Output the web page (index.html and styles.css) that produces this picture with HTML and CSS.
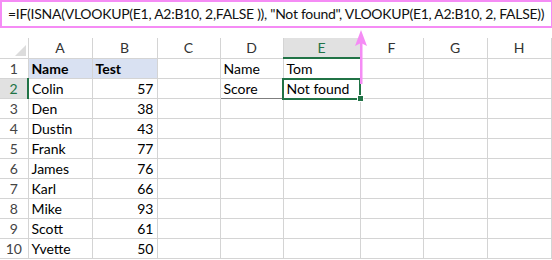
FILE: index.html
```html
<!DOCTYPE html>
<html lang="en">
<head>
    <meta charset="UTF-8">
    <title>VLOOKUP with ISNA</title>
    <link rel="stylesheet" href="styles.css">
</head>
<body>
    <div class="formula-bar">=IF(ISNA(VLOOKUP(E1, A2:B10, 2,FALSE )), "Not found", VLOOKUP(E1, A2:B10, 2, FALSE))</div>

    <div class="sheet">
        <table class="grid">
            <colgroup>
                <col class="c-hdr">
                <col class="c-a">
                <col class="c-b">
                <col class="c-c">
                <col class="c-d">
                <col class="c-e">
                <col class="c-f">
                <col class="c-g">
                <col class="c-h">
            </colgroup>
            <tr class="col-heads">
                <th class="corner"><span class="tri"></span></th>
                <th>A</th><th>B</th><th>C</th><th>D</th>
                <th class="sel">E</th>
                <th>F</th><th>G</th><th>H</th>
            </tr>
            <tr>
                <th class="row-num">1</th>
                <td class="title">Name</td><td class="title">Test</td><td></td>
                <td class="box box-top">Name</td><td class="box box-top box-right">Tom</td>
                <td></td><td></td><td></td>
            </tr>
            <tr>
                <th class="row-num sel">2</th>
                <td>Colin</td><td class="num">57</td><td></td>
                <td class="box box-bottom">Score</td><td class="box box-bottom box-right active">Not found</td>
                <td></td><td></td><td></td>
            </tr>
            <tr><th class="row-num">3</th><td>Den</td><td class="num">38</td><td></td><td></td><td></td><td></td><td></td><td></td></tr>
            <tr><th class="row-num">4</th><td>Dustin</td><td class="num">43</td><td></td><td></td><td></td><td></td><td></td><td></td></tr>
            <tr><th class="row-num">5</th><td>Frank</td><td class="num">77</td><td></td><td></td><td></td><td></td><td></td><td></td></tr>
            <tr><th class="row-num">6</th><td>James</td><td class="num">76</td><td></td><td></td><td></td><td></td><td></td><td></td></tr>
            <tr><th class="row-num">7</th><td>Karl</td><td class="num">66</td><td></td><td></td><td></td><td></td><td></td><td></td></tr>
            <tr><th class="row-num">8</th><td>Mike</td><td class="num">93</td><td></td><td></td><td></td><td></td><td></td><td></td></tr>
            <tr><th class="row-num">9</th><td>Scott</td><td class="num">61</td><td></td><td></td><td></td><td></td><td></td><td></td></tr>
            <tr><th class="row-num">10</th><td>Yvette</td><td class="num">50</td><td></td><td></td><td></td><td></td><td></td><td></td></tr>
        </table>

        <!-- pink arrow from E2 up to the formula -->
        <svg class="arrow" width="16" height="54" viewBox="0 0 16 54">
            <path d="M8 0 L14 16 L8 13 L2 16 Z" fill="#f58cf5"/>
            <rect x="7" y="12" width="2.5" height="42" fill="#f58cf5"/>
        </svg>
    </div>
</body>
</html>
```

FILE: styles.css
```css
/* General */
body {
    margin: 0;
    background: #fff;
    font-family: Lato, "Open Sans", sans-serif;
    color: #000;
}
/* Formula bar */
.formula-bar {
    height: 24px;
    width: 543px;
    border: 2px solid #f58cf5;
    padding-left: 6px;
    font-size: 14px;
    letter-spacing: -0.28px;
    line-height: 24px;
    white-space: nowrap;
    color: #111;
}
/* Sheet grid */
.sheet {
    position: relative;
    margin-top: 10px;
}
.grid {
    border-collapse: collapse;
    table-layout: fixed;
    width: 551px;
    font-size: 14px;
}
.c-hdr { width: 28px; }
.c-a { width: 64px; }
.c-b { width: 65px; }
.c-c { width: 63px; }
.c-d { width: 63px; }
.c-e { width: 77px; }
.c-f { width: 63px; }
.c-g { width: 64px; }
.c-h { width: 64px; }

.grid td,
.grid th {
    height: 19px;
    padding: 0 3px;
    border: 1px solid #d4d4d4;
    line-height: 19px;
    white-space: nowrap;
    overflow: hidden;
}
.grid th {
    font-weight: normal;
    color: #444;
    font-size: 14px;
}
.col-heads th {
    border-top: none;
    text-align: center;
    color: #333;
}
.grid tr > :first-child {
    border-left: none;
}
.corner {
    position: relative;
}
.tri {
    position: absolute;
    right: 2px;
    bottom: 2px;
    width: 0;
    height: 0;
    border-left: 11px solid transparent;
    border-bottom: 11px solid #dcdcdc;
}
.row-num {
    text-align: center;
    padding: 0;
}
.grid th.sel {
    background: #e1e1e1;
    color: #217346;
}
.col-heads th.sel {
    border-bottom: 2px solid #217346;
}
.row-num.sel {
    border-right: 2px solid #217346;
}
/* Cells */
.title {
    background: #d9e1f2;
    font-weight: bold;
}
.num {
    text-align: right;
}
.grid td.box {
    border-left: 1px solid #7f7f7f;
}
.grid td.box-top { border-top: 1px solid #7f7f7f; }
.grid td.box-bottom { border-bottom: 1px solid #7f7f7f; }
.grid td.box-right { border-right: 1px solid #7f7f7f; }

.grid td.active {
    position: relative;
    outline: 2px solid #217346;
    outline-offset: -1px;
    overflow: visible;
}
.active::after {
    content: "";
    position: absolute;
    right: -4px;
    bottom: -4px;
    width: 5px;
    height: 5px;
    background: #217346;
    border: 1px solid #fff;
}
/* Arrow overlay */
.arrow {
    position: absolute;
    left: 353px;
    top: -8px;
}
```
